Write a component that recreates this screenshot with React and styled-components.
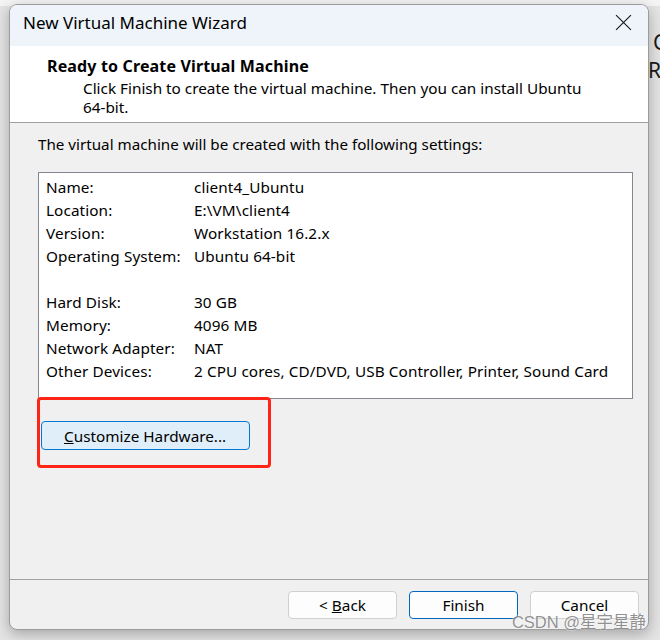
import React from "react";
import styled, { createGlobalStyle } from "styled-components";

const GlobalStyle = createGlobalStyle`
  html, body {
    margin: 0;
    padding: 0;
    background: #e6e6e6;
  }
  body {
    font-family: "Noto Sans", "Open Sans", sans-serif;
    color: #000;
  }
`;

// desktop behind the dialog
const Desktop = styled.div`
  position: relative;
  width: 660px;
  height: 640px;
  overflow: hidden;
  background: linear-gradient(#f4f4f4 0, #f4f4f4 6px, #e4e4e4 6px);
`;

const BackText = styled.span`
  position: absolute;
  left: ${(p) => p.left}px;
  top: ${(p) => p.top}px;
  font-size: 21px;
  color: #1a1a1a;
`;

const Window = styled.div`
  position: absolute;
  left: 9px;
  top: 4px;
  width: 640px;
  height: 626px;
  box-sizing: border-box;
  border: 1px solid #9c9c9c;
  border-radius: 8px;
  overflow: hidden;
  background: #f0f0f0;
  display: flex;
  flex-direction: column;
  box-shadow: 0 4px 14px rgba(0, 0, 0, 0.28);
`;

const TitleBar = styled.div`
  height: 41px;
  flex: none;
  box-sizing: border-box;
  background: #eef4f9;
  display: flex;
  align-items: center;
  justify-content: space-between;
  padding: 0 15px 6px 13px;
`;

const Title = styled.span`
  font-size: 17px;
  color: #000;
`;

const CloseButton = styled.button`
  border: none;
  background: transparent;
  padding: 0;
  width: 20px;
  height: 20px;
  display: flex;
  align-items: center;
  justify-content: center;
`;

const Header = styled.div`
  height: 77px;
  flex: none;
  background: #fff;
  border-bottom: 1px solid #a0a0a0;
  box-sizing: border-box;
  padding: 10px 0 0 37px;
`;

const HeaderTitle = styled.div`
  font-size: 16px;
  font-weight: 700;
  line-height: 20px;
  letter-spacing: 0.15px;
`;

const HeaderText = styled.div`
  font-size: 15.3px;
  line-height: 19px;
  padding-left: 36px;
  width: 515px;
  margin-top: 3px;
`;

const NoWrap = styled.span`
  white-space: nowrap;
`;

const Body = styled.div`
  flex: 1;
  padding: 10px 0 0 28px;
  display: flex;
  flex-direction: column;
  align-items: flex-start;
`;

const Intro = styled.div`
  font-size: 15.2px;
  line-height: 22px;
`;

const ListBox = styled.div`
  margin-top: 17px;
  width: 595px;
  height: 227px;
  box-sizing: border-box;
  border: 1px solid #828790;
  background: #fff;
  padding: 2px 0 0 7px;
`;

const Row = styled.div`
  display: grid;
  grid-template-columns: 148px 1fr;
  height: 23px;
  align-items: center;
  font-size: 15.3px;
  letter-spacing: 0.1px;
  white-space: nowrap;
`;

const Highlight = styled.div`
  margin: -2px 0 0 -1px;
  border: 3px solid #ff2416;
  border-radius: 4px;
  padding: 21px 18px 15px 1px;
`;

const CustomizeButton = styled.button`
  width: 209px;
  height: 29px;
  box-sizing: border-box;
  background: #e0eef9;
  border: 1px solid #0078d4;
  border-radius: 4px;
  font-family: inherit;
  font-size: 15.3px;
  color: #000;
  text-align: left;
  padding: 0 0 0 22px;
`;

const Footer = styled.div`
  height: 50px;
  flex: none;
  box-sizing: border-box;
  border-top: 1px solid #a0a0a0;
  display: flex;
  justify-content: flex-end;
  gap: 12px;
  padding: 11px 9px 0 0;
`;

const DialogButton = styled.button`
  width: 109px;
  height: 28px;
  box-sizing: border-box;
  background: #fdfdfd;
  border: 1px solid ${(p) => (p.$default ? "#0067c0" : "#d0d0d0")};
  border-radius: 4px;
  font-family: inherit;
  font-size: 15.3px;
  color: #000;
`;

const Watermark = styled.div`
  position: absolute;
  right: 14px;
  bottom: 7px;
  font-family: "Liberation Sans", "Noto Sans CJK SC", sans-serif;
  font-size: 16.5px;
  color: rgba(110, 110, 110, 0.75);
  text-shadow: 0 0 2px #fff;
`;

const rows = [
  ["Name:", "client4_Ubuntu"],
  ["Location:", "E:\\VM\\client4"],
  ["Version:", "Workstation 16.2.x"],
  ["Operating System:", "Ubuntu 64-bit"],
  ["", ""],
  ["Hard Disk:", "30 GB"],
  ["Memory:", "4096 MB"],
  ["Network Adapter:", "NAT"],
  ["Other Devices:", "2 CPU cores, CD/DVD, USB Controller, Printer, Sound Card"],
];

export default function App() {
  return (
    <>
      <GlobalStyle />
      <Desktop>
        <BackText left={653} top={28}>C</BackText>
        <BackText left={648} top={56}>Re</BackText>
        <Window>
          <TitleBar>
            <Title>New Virtual Machine Wizard</Title>
            <CloseButton aria-label="Close">
              <svg width="17" height="17" viewBox="0 0 16 16">
                <path d="M1 1 L15 15 M15 1 L1 15" stroke="#1a1a1a" strokeWidth="1.1" />
              </svg>
            </CloseButton>
          </TitleBar>
          <Header>
            <HeaderTitle>Ready to Create Virtual Machine</HeaderTitle>
            <HeaderText>
              Click Finish to create the virtual machine. Then you can install Ubuntu{" "}
              <NoWrap>64-bit.</NoWrap>
            </HeaderText>
          </Header>
          <Body>
            <Intro>The virtual machine will be created with the following settings:</Intro>
            <ListBox>
              {rows.map(([label, value], i) => (
                <Row key={i}>
                  <span>{label}</span>
                  <span>{value}</span>
                </Row>
              ))}
            </ListBox>
            <Highlight>
              <CustomizeButton>
                <u>C</u>ustomize Hardware...
              </CustomizeButton>
            </Highlight>
          </Body>
          <Footer>
            <DialogButton>
              &lt; <u>B</u>ack
            </DialogButton>
            <DialogButton $default>Finish</DialogButton>
            <DialogButton>Cancel</DialogButton>
          </Footer>
        </Window>
        <Watermark>CSDN @星宇星静</Watermark>
      </Desktop>
    </>
  );
}
